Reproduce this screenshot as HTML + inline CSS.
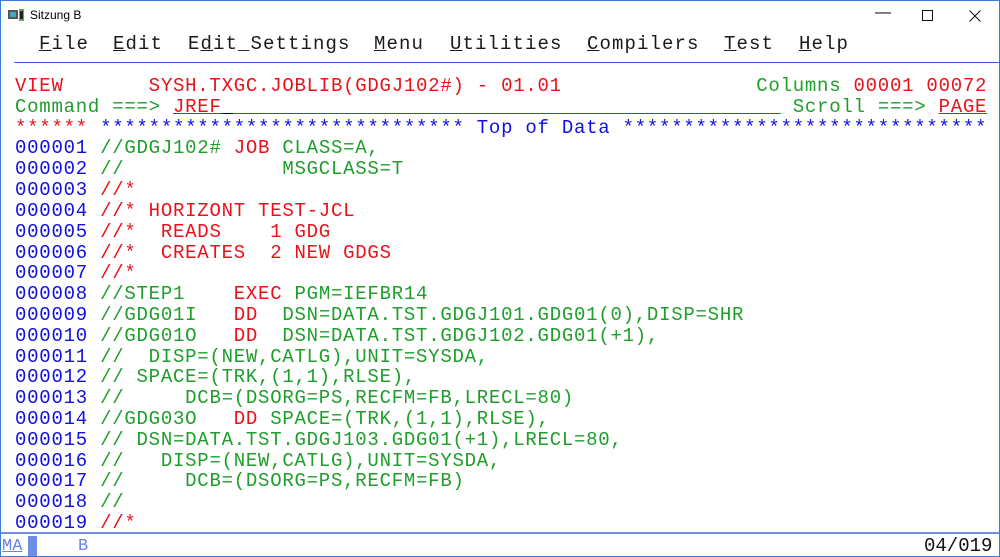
<!DOCTYPE html>
<html><head><meta charset="utf-8"><style>
html,body{margin:0;padding:0;}
body{width:1000px;height:557px;position:relative;background:#fff;overflow:hidden;font-family:"Liberation Mono",monospace;}
.frame{position:absolute;left:0;top:0;width:998px;height:555px;border:1px solid #3a7bd5;}
.title{position:absolute;left:30px;top:8px;font:12px "Liberation Sans",sans-serif;color:#000;}
.ctl{position:absolute;top:4px;font:16px "Liberation Sans",sans-serif;color:#111;}
.menu{position:absolute;top:33px;font-size:19px;color:#1a1a1a;letter-spacing:1.1px;white-space:pre;}
.menu u{text-decoration:underline;}
.sep1{position:absolute;left:14px;right:0;top:62px;height:1px;background:#3a5fd8;}
pre{position:absolute;left:15px;top:76px;margin:0;font-family:"Liberation Mono",monospace;font-size:19px;line-height:20.81px;letter-spacing:0.75px;}
.r{color:#e8121b}.g{color:#1e9e2a}.b{color:#1010e0}.k{color:#000}
.u{text-decoration:underline;text-decoration-color:#e8121b;}
.sep2{position:absolute;left:1px;right:1px;top:532px;height:2px;background:#6f8fe6;}
.st{position:absolute;top:537px;font-size:17px;color:#6a82e0;}
</style></head><body>
<div class="frame"></div>
<svg style="position:absolute;left:8px;top:9px" width="18" height="13"><rect x="0" y="1" width="10" height="9" fill="#555"/><rect x="2" y="3" width="6" height="5" fill="#4ab"/><rect x="11" y="0" width="5" height="12" fill="#6a5"/><rect x="12" y="2" width="3" height="8" fill="#222"/></svg>
<div class="title">Sitzung B</div>
<div class="ctl" style="left:875px;">&#8212;</div>
<svg style="position:absolute;left:922px;top:10px" width="11" height="11"><rect x="0.5" y="0.5" width="10" height="10" fill="none" stroke="#111"/></svg>
<svg style="position:absolute;left:969px;top:10px" width="12" height="12"><path d="M0.5 0.5L11.5 11.5M11.5 0.5L0.5 11.5" stroke="#111"/></svg>
<div class="menu" style="left:39px"><u>F</u>ile</div>
<div class="menu" style="left:113px"><u>E</u>dit</div>
<div class="menu" style="left:188px">E<u>d</u>it_Settings</div>
<div class="menu" style="left:374px"><u>M</u>enu</div>
<div class="menu" style="left:450px"><u>U</u>tilities</div>
<div class="menu" style="left:587px"><u>C</u>ompilers</div>
<div class="menu" style="left:724px"><u>T</u>est</div>
<div class="menu" style="left:799px"><u>H</u>elp</div>
<div class="sep1"></div>
<pre><span class="r">VIEW       SYSH.TXGC.JOBLIB(GDGJ102#) - 01.01</span>                <span class="g">Columns </span><span class="r">00001 00072</span>
<span class="g">Command ===> </span><span class="r u">JREF<span class="k">_</span>                                             </span> <span class="g">Scroll ===> </span><span class="r u">PAGE</span>
<span class="r">******</span><span class="b"> ****************************** Top of Data ******************************</span>
<span class="b">000001 </span><span class="g">//GDGJ102# </span><span class="r">JOB</span><span class="g"> CLASS=A,</span>
<span class="b">000002 </span><span class="g">//             MSGCLASS=T</span>
<span class="b">000003 </span><span class="r">//*</span>
<span class="b">000004 </span><span class="r">//* HORIZONT TEST-JCL</span>
<span class="b">000005 </span><span class="r">//*  READS    1 GDG</span>
<span class="b">000006 </span><span class="r">//*  CREATES  2 NEW GDGS</span>
<span class="b">000007 </span><span class="r">//*</span>
<span class="b">000008 </span><span class="g">//STEP1    </span><span class="r">EXEC</span><span class="g"> PGM=IEFBR14</span>
<span class="b">000009 </span><span class="g">//GDG01I   </span><span class="r">DD</span><span class="g">  DSN=DATA.TST.GDGJ101.GDG01(0),DISP=SHR</span>
<span class="b">000010 </span><span class="g">//GDG01O   </span><span class="r">DD</span><span class="g">  DSN=DATA.TST.GDGJ102.GDG01(+1),</span>
<span class="b">000011 </span><span class="g">//  DISP=(NEW,CATLG),UNIT=SYSDA,</span>
<span class="b">000012 </span><span class="g">// SPACE=(TRK,(1,1),RLSE),</span>
<span class="b">000013 </span><span class="g">//     DCB=(DSORG=PS,RECFM=FB,LRECL=80)</span>
<span class="b">000014 </span><span class="g">//GDG03O   </span><span class="r">DD</span><span class="g"> SPACE=(TRK,(1,1),RLSE),</span>
<span class="b">000015 </span><span class="g">// DSN=DATA.TST.GDGJ103.GDG01(+1),LRECL=80,</span>
<span class="b">000016 </span><span class="g">//   DISP=(NEW,CATLG),UNIT=SYSDA,</span>
<span class="b">000017 </span><span class="g">//     DCB=(DSORG=PS,RECFM=FB)</span>
<span class="b">000018 </span><span class="g">//</span>
<span class="b">000019 </span><span class="r">//*</span></pre>
<div class="sep2"></div>
<div class="st" style="left:2px;text-decoration:underline;">MA</div>
<div style="position:absolute;left:28px;top:536px;width:9px;height:20px;background:#6f8fe6;"></div>
<div class="st" style="left:78px;">B</div>
<div class="st" style="left:924px;color:#111;font-size:19px;top:535px;">04/019</div>
</body></html>
